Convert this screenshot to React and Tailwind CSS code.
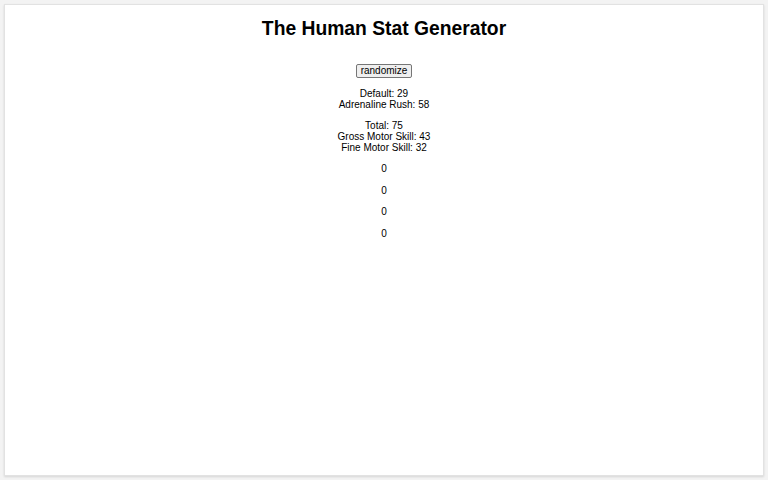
export default function App() {
  return (
    <div className="w-[768px] h-[480px] bg-[#f3f3f3] p-[4px]" style={{ fontFamily: '"Liberation Sans", Arial, sans-serif' }}>
      <div className="h-full bg-white border border-[#e2e2e2] shadow-[0_1px_2px_rgba(0,0,0,0.12)] flex flex-col items-center text-black">
        <h1 className="text-[19.3px] font-bold leading-[24px] mt-[12px]">The Human Stat Generator</h1>
        <button className="mt-[23px] text-[10px] leading-[12px] px-[4px] py-0 bg-[#efefef] border border-[#767676] rounded-[2px]">randomize</button>
        <div className="mt-[11px] text-[10px] leading-[10.75px] text-center">
          <div>Default: 29</div>
          <div>Adrenaline Rush: 58</div>
          <div className="mt-[10.75px]">Total: 75</div>
          <div>Gross Motor Skill: 43</div>
          <div>Fine Motor Skill: 32</div>
          <div className="mt-[10.75px]">0</div>
          <div className="mt-[10.75px]">0</div>
          <div className="mt-[10.75px]">0</div>
          <div className="mt-[10.75px]">0</div>
        </div>
      </div>
    </div>
  );
}
